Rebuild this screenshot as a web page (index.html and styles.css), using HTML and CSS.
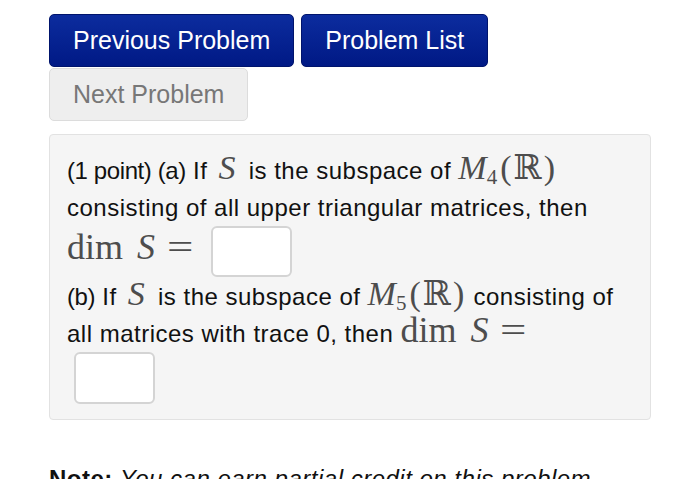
FILE: index.html
```html
<!DOCTYPE html>
<html lang="en">

<head>
    <meta charset="UTF-8">
    <meta name="viewport" content="width=device-width, initial-scale=1.0">
    <title>Problem</title>
    <link rel="stylesheet" href="styles.css">
</head>

<body>
    <div class="wrapper">
        <div class="nav-buttons">
            <button class="btn btn-primary">Previous Problem</button>
            <button class="btn btn-primary">Problem List</button>
            <button class="btn btn-disabled">Next Problem</button>
        </div>

        <div class="problem">
            <p class="line"><span class="lbl">(1 point) (a)</span> If <span class="math"><i class="s">S</i></span> is the subspace of
                <span class="math"><i>M</i><sub>4</sub><span class="paren">(ℝ)</span></span>
                consisting of all upper triangular matrices, then
                <span class="math big">dim<i class="sp">S</i><span class="eq">=</span></span><span class="answer"></span>
            </p>
            <p class="line line-b"><span class="lbl">(b)</span> If <span class="math"><i class="s">S</i></span> is the subspace of
                <span class="math"><i>M</i><sub>5</sub><span class="paren">(ℝ)</span></span> consisting of
                all matrices with trace 0, then <span class="math big">dim<i class="sp">S</i><span class="eq">=</span></span>
                <br>
                <span class="answer answer-b"></span>
            </p>
        </div>

        <p class="note"><b>Note:</b> <i>You can earn partial credit on this problem.</i></p>
    </div>
</body>

</html>
```

FILE: styles.css
```css
body {
    margin: 0;
    background: #fff;
    font-family: "Liberation Sans", Arial, sans-serif;
    color: #111;
}

.wrapper {
    padding: 14px 49px 0 49px;
}

.nav-buttons {
    display: flex;
    flex-wrap: wrap;
    column-gap: 7px;
    row-gap: 1px;
    width: 460px;
}

.btn {
    font-family: "Liberation Sans", Arial, sans-serif;
    font-size: 25px;
    height: 53px;
    padding: 0 23px;
    border-radius: 5px;
}

.btn-primary {
    color: #fff;
    background: linear-gradient(#0c2c9e, #001985);
    border: 1px solid #00146c;
}

.btn-disabled {
    color: #777;
    background: #eeeeee;
    border: 1px solid #dcdcdc;
}

.problem {
    margin-top: 13px;
    width: 602px;
    height: 286px;
    box-sizing: border-box;
    padding: 17px 17px;
    background: #f5f5f5;
    border: 1px solid #e2e2e2;
    border-radius: 4px;
}

.line {
    margin: 0;
    font-size: 24px;
    line-height: 37px;
    letter-spacing: 0.5px;
}

.lbl {
    letter-spacing: -0.4px;
}

.line-b {
    margin-top: 1px;
}

.math {
    font-family: "Liberation Serif", "DejaVu Serif", serif;
    font-size: 34px;
    line-height: 10px;
    letter-spacing: 0;
    color: #4d4d4d;
}

.math .s {
    margin: 0 6px 0 4px;
}

.paren {
    letter-spacing: 2px;
    margin-left: 3px;
}

.math.big {
    font-size: 36px;
}

.sp {
    margin-left: 14px;
}

.eq {
    display: inline-block;
    margin-left: 12px;
    transform: scaleX(1.3);
    transform-origin: left;
    margin-right: 8px;
}

.math sub {
    font-size: 21px;
    line-height: 10px;
    vertical-align: -5px;
}

.answer {
    display: inline-block;
    width: 81px;
    height: 51px;
    box-sizing: border-box;
    border: 2px solid #d4d4d4;
    border-radius: 6px;
    background: #fff;
    vertical-align: -18px;
    margin-left: 16px;
}

.answer-b {
    height: 52px;
    margin: 0 0 0 7px;
    vertical-align: -20px;
}

.note {
    margin: 45px 0 0 0;
    font-size: 24px;
    letter-spacing: 0.5px;
}
```
